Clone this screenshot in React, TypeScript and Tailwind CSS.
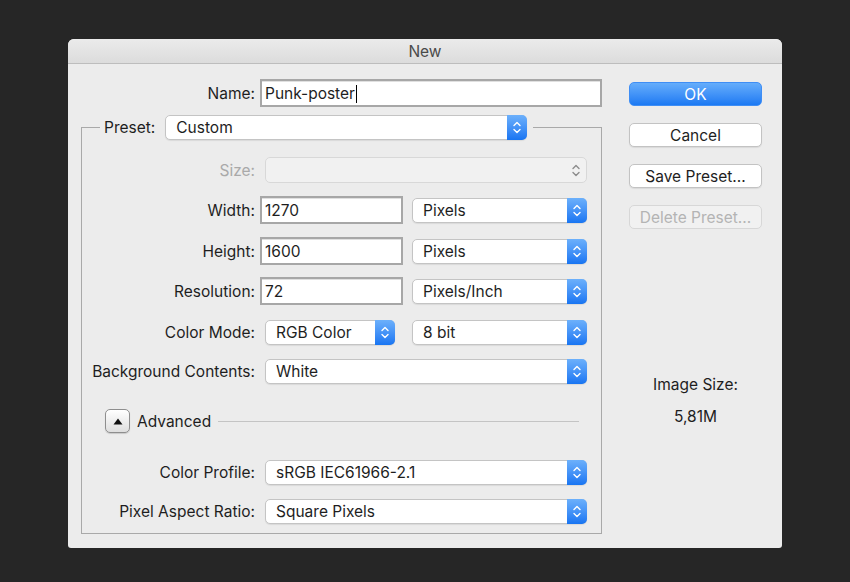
import React from "react";

const Chevrons = ({ color = "#ffffff" }: { color?: string }) => (
  <svg width="8" height="13" viewBox="0 0 8 13" fill="none">
    <path d="M1 4.5 L4 1.5 L7 4.5" stroke={color} strokeWidth="1.4" strokeLinecap="round" strokeLinejoin="round" />
    <path d="M1 8.5 L4 11.5 L7 8.5" stroke={color} strokeWidth="1.4" strokeLinecap="round" strokeLinejoin="round" />
  </svg>
);

const Select = ({ value, className = "", disabled = false }: { value?: string; className?: string; disabled?: boolean }) => {
  if (disabled) {
    return (
      <div className={`flex h-[26px] items-center justify-end rounded-[5px] border border-[#d8d8d8] bg-[#f1f1f1] pr-[6px] ${className}`}>
        <Chevrons color="#8c8c8c" />
      </div>
    );
  }
  return (
    <div className={`flex h-[25px] items-stretch rounded-[5px] border border-[#c4c4c4] bg-white shadow-[0_1px_1px_rgba(0,0,0,0.08)] ${className}`}>
      <div className="flex flex-1 items-center pl-[10px] pt-px text-[#1e1e1e]">{value}</div>
      <div className="-my-px -mr-px flex w-[20px] items-center justify-center rounded-r-[5px] bg-gradient-to-b from-[#6cb0fb] to-[#1775f2]">
        <Chevrons />
      </div>
    </div>
  );
};

const TextInput = ({ value, className = "", caret = false }: { value: string; className?: string; caret?: boolean }) => (
  <div className={`flex h-[28px] items-center border-2 border-[#a7a7a7] bg-white pl-[3px] pt-px text-[#1e1e1e] shadow-[inset_0_1px_0_#e0e0e0] ${className}`}>
    {value}
    {caret && <span className="ml-px h-[18px] w-px bg-black" />}
  </div>
);

const Row = ({ label, children, className = "", muted = false }: { label: string; children: React.ReactNode; className?: string; muted?: boolean }) => (
  <div className={`flex h-[28px] items-center ${className}`}>
    <div className={`w-[173px] whitespace-nowrap pt-px text-right ${muted ? "text-[#a9a9a9]" : "text-[#1e1e1e]"}`}>{label}</div>
    {children}
  </div>
);

const Button = ({ children, variant = "default" }: { children: React.ReactNode; variant?: "primary" | "default" | "disabled" }) => {
  const styles = {
    primary: "border-[#3f8ef5] bg-gradient-to-b from-[#65adfb] to-[#1b79f3] text-white",
    default: "border-[#c3c3c3] bg-white text-[#1e1e1e] shadow-[0_1px_1px_rgba(0,0,0,0.08)]",
    disabled: "border-[#d7d7d7] bg-[#f1f1f1] text-[#b4b4b4]",
  };
  return (
    <div className={`flex h-[24px] w-[133px] items-center justify-center rounded-[5px] border pt-px ${styles[variant]}`}>{children}</div>
  );
};

export default function App() {
  return (
    <div className="h-[582px] w-[850px] bg-[#262626] pl-[68px] pt-[39px] text-[15.5px] leading-none" style={{ fontFamily: "Inter, 'Liberation Sans', sans-serif" }}>
      <div className="flex h-[509px] w-[714px] flex-col overflow-hidden rounded-t-[6px] rounded-b-[3px] bg-[#ececec]">
        {/* title bar */}
        <div className="flex h-[25px] items-center justify-center border-b border-[#bdbdbd] bg-gradient-to-b from-[#ebebeb] to-[#dcdcdc] pt-[2px] text-[#4a4a4a]">
          New
        </div>

        <div className="flex">
          {/* left column */}
          <div className="pl-[13px] pt-[15px]">
            <div className="flex h-[28px] items-center">
              <div className="w-[174px] pt-px text-right text-[#1e1e1e]">Name:</div>
              <TextInput value="Punk-poster" caret className="ml-[5px] w-[342px]" />
            </div>

            <fieldset className="mt-[8px] w-[521px] border border-[#a9a9a9] pb-[8px]">
              <legend className="ml-[18px] flex items-center pl-[4px] pr-[6px]">
                <span className="pt-px text-[#1e1e1e]">Preset:</span>
                <Select value="Custom" className="ml-[10px] w-[362px]" />
              </legend>

              <Row label="Size:" muted className="mt-[16px]">
                <Select disabled className="ml-[10px] w-[322px]" />
              </Row>
              <Row label="Width:" className="mt-[12px]">
                <TextInput value="1270" className="ml-[5px] w-[143px]" />
                <Select value="Pixels" className="ml-[9px] w-[175px]" />
              </Row>
              <Row label="Height:" className="mt-[13px]">
                <TextInput value="1600" className="ml-[5px] w-[143px]" />
                <Select value="Pixels" className="ml-[9px] w-[175px]" />
              </Row>
              <Row label="Resolution:" className="mt-[12px]">
                <TextInput value="72" className="ml-[5px] w-[143px]" />
                <Select value="Pixels/Inch" className="ml-[9px] w-[175px]" />
              </Row>
              <Row label="Color Mode:" className="mt-[13px]">
                <Select value="RGB Color" className="ml-[10px] w-[130px]" />
                <Select value="8 bit" className="ml-[17px] w-[175px]" />
              </Row>
              <Row label="Background Contents:" className="mt-[11px]">
                <Select value="White" className="ml-[10px] w-[322px]" />
              </Row>

              {/* advanced */}
              <div className="mt-[22px] flex h-[28px] items-center">
                <div className="ml-[23px] flex h-[24px] w-[25px] items-center justify-center rounded-[5px] border border-[#8e8e8e] bg-gradient-to-b from-white to-[#dedede] shadow-[0_1px_1px_rgba(0,0,0,0.15)]">
                  <svg width="10" height="7" viewBox="0 0 10 7">
                    <path d="M5 0.5 L9.5 6.5 L0.5 6.5 Z" fill="#111" />
                  </svg>
                </div>
                <span className="ml-[7px] pt-px text-[#1e1e1e]">Advanced</span>
                <div className="ml-[7px] mr-[22px] h-px flex-1 bg-[#c4c4c4]" />
              </div>

              <Row label="Color Profile:" className="mt-[23px]">
                <Select value="sRGB IEC61966-2.1" className="ml-[10px] w-[322px]" />
              </Row>
              <Row label="Pixel Aspect Ratio:" className="mt-[11px]">
                <Select value="Square Pixels" className="ml-[10px] w-[322px]" />
              </Row>
            </fieldset>
          </div>

          {/* right column */}
          <div className="ml-[27px] flex flex-col pt-[18px]">
            <div className="flex flex-col gap-[17px]">
              <Button variant="primary">OK</Button>
              <Button>Cancel</Button>
              <Button>Save Preset...</Button>
              <Button variant="disabled">Delete Preset...</Button>
            </div>
            <div className="mt-[148px] text-center text-[#1e1e1e]">Image Size:</div>
            <div className="mt-[16px] text-center text-[#1e1e1e]">5,81M</div>
          </div>
        </div>
      </div>
    </div>
  );
}
